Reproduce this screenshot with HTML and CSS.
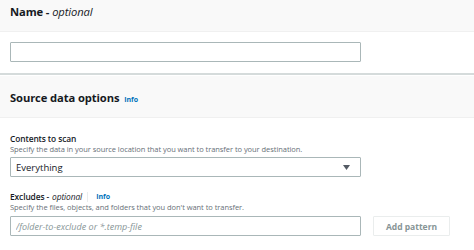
FILE: index.html
```html
<!DOCTYPE html>
<html lang="en">
  <head>
    <meta charset="UTF-8" />
    <title>Transfer settings</title>
    <link rel="stylesheet" href="styles.css">
  </head>
  <body>
    <div class="panel">
      <div class="head">
        <h2>Name - <i>optional</i></h2>
      </div>
      <div class="body name-body">
        <input class="input" type="text" />
      </div>
    </div>

    <div class="panel">
      <div class="head source-head">
        <h2>Source data options <a class="info" href="#">Info</a></h2>
      </div>
      <div class="body">
        <div class="field">
          <label>Contents to scan</label>
          <p class="desc">Specify the data in your source location that you want to transfer to your destination.</p>
          <div class="select">
            <span>Everything</span>
            <svg width="7" height="5" viewBox="0 0 7 5"><path d="M0 0 H7 L3.5 5 Z" fill="#545b64"/></svg>
          </div>
        </div>
        <div class="field">
          <label>Excludes - <i>optional</i><span class="sep"></span><a class="info" href="#">Info</a></label>
          <p class="desc">Specify the files, objects, and folders that you don't want to transfer.</p>
          <div class="row">
            <input class="input" type="text" placeholder="/folder-to-exclude or *.temp-file" />
            <button class="btn">Add pattern</button>
          </div>
        </div>
      </div>
    </div>
  </body>
</html>
```

FILE: styles.css
```css
body {
  margin: 0;
  background-color: #fff;
  font-family: "Open Sans", "Noto Sans", sans-serif;
  color: #16191f;
}
.panel {
  border-bottom: 2px solid #d5dbdb;
}
.head {
  background-color: #f9f9f9;
  border-bottom: 1px solid #f0f0f0;
  height: 31px;
  padding: 0 10px;
  display: flex;
  align-items: center;
}
.head h2 {
  margin-bottom: 7px;
}
.source-head {
  height: 41px;
  margin-top: 1px;
  align-items: flex-end;
}
.source-head h2 {
  margin-bottom: 10px;
}
h2 {
  margin: 0;
  font-size: 11.2px;
  line-height: 14px;
  font-weight: 700;
  letter-spacing: -0.1px;
}
h2 i {
  font-weight: 400;
}
.info {
  color: #0073bb;
  font-size: 7px;
  font-weight: 700;
  text-decoration: none;
  margin-left: 2px;
  letter-spacing: 0;
}
.body {
  padding: 15px 10px 14px;
}
.name-body {
  padding: 10px 10px 0;
  height: 31px;
}
.input {
  display: block;
  box-sizing: border-box;
  width: 351px;
  height: 20px;
  border: 1px solid #aab7b8;
  border-radius: 1px;
  padding: 0 5px;
  font-family: inherit;
  font-size: 9px;
  margin: 0;
}
.input::placeholder {
  color: #879596;
  font-style: italic;
}
.field + .field {
  margin-top: 14px;
}
label {
  display: flex;
  align-items: center;
  font-size: 8.4px;
  font-weight: 600;
  line-height: 11px;
  letter-spacing: -0.1px;
}
label i {
  font-weight: 400;
  margin-left: 3px;
}
.sep {
  width: 1px;
  height: 10px;
  background-color: #eaeded;
  margin: 0 6px 0 5px;
}
.desc {
  margin: 0 0 3px;
  font-size: 7.5px;
  line-height: 10px;
  color: #687078;
  letter-spacing: -0.05px;
}
.field + .field .desc {
  margin-bottom: 4px;
}
.select {
  box-sizing: border-box;
  width: 351px;
  height: 20px;
  border: 1px solid #aab7b8;
  border-radius: 1px;
  padding: 0 10px 0 5px;
  display: flex;
  justify-content: space-between;
  align-items: center;
  font-size: 9.5px;
}
.row {
  display: flex;
  align-items: center;
}
.btn {
  margin-left: 12px;
  width: 77px;
  height: 20px;
  border: 1px solid #eaeded;
  border-radius: 1px;
  background-color: #fff;
  color: #879596;
  font-family: inherit;
  font-size: 8.5px;
  font-weight: 700;
  padding: 0;
}
```
